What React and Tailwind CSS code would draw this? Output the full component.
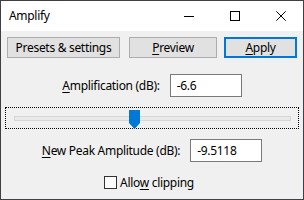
function TitleButton({ children }) {
  return <div className="w-[46px] h-full flex items-center justify-center pl-[2px]">{children}</div>
}

function Field({ mnemonic, rest, value }) {
  return (
    <div className="flex items-center justify-center gap-[10px] h-[23px]">
      <span>
        <span className="underline underline-offset-2">{mnemonic}</span>
        {rest}
      </span>
      <div className="w-[72px] h-[23px] border border-[#7a7a7a] bg-white pl-[6px] flex items-center">{value}</div>
    </div>
  )
}

export default function App() {
  return (
    <div className="w-[304px] h-[200px] border border-[#3f3f46] bg-[#f0f0f0] flex flex-col font-['Segoe_UI','Noto_Sans',sans-serif] text-[12px] tracking-[-0.3px] leading-none text-black">
      {/* title bar */}
      <div className="h-[30px] bg-white flex items-center shrink-0">
        <span className="pl-[8px] flex-1">Amplify</span>
        <TitleButton>
          <svg width="10" height="10" viewBox="0 0 10 10" shapeRendering="crispEdges">
            <line x1="0" y1="5.5" x2="10" y2="5.5" stroke="#000" strokeWidth="1" />
          </svg>
        </TitleButton>
        <TitleButton>
          <svg width="10" height="10" viewBox="0 0 10 10" shapeRendering="crispEdges">
            <rect x="0.5" y="0.5" width="9" height="9" fill="none" stroke="#000" strokeWidth="1" />
          </svg>
        </TitleButton>
        <TitleButton>
          <svg width="10" height="10" viewBox="0 0 10 10">
            <path d="M0.3 0.3 L9.7 9.7 M9.7 0.3 L0.3 9.7" stroke="#000" strokeWidth="1" />
          </svg>
        </TitleButton>
      </div>

      {/* buttons */}
      <div className="flex pl-[6px] mt-[6px] h-[21px]">
        <button className="w-[113px] h-full bg-[#e1e1e1] border border-[#adadad]">Presets &amp; settings</button>
        <button className="w-[88px] h-full ml-[9px] bg-[#e1e1e1] border border-[#adadad]">
          <span className="underline underline-offset-2">P</span>review
        </button>
        <button className="w-[73px] h-full ml-[7px] bg-[#e1e1e1] border-2 border-[#0078d7]">
          <span className="underline underline-offset-2">A</span>pply
        </button>
      </div>

      <div className="mt-[16px]">
        <Field mnemonic="A" rest="mplification (dB):" value="-6.6" />
      </div>

      {/* slider */}
      <div className="relative mt-[10px] mx-[4px] h-[22px] border border-dotted border-black flex items-center pl-[8px] pr-[7px]">
        <div className="w-full h-[5px] bg-[#e7eae7] border border-[#d6d6d6]" />
        <svg className="absolute left-[123px] top-[2px]" width="11" height="19" viewBox="0 0 11 19">
          <polygon points="0,0 11,0 11,13 5.5,19 0,13" fill="#0078d7" />
        </svg>
      </div>

      <div className="mt-[10px]">
        <Field mnemonic="N" rest="ew Peak Amplitude (dB):" value="-9.5118" />
      </div>

      <div className="mt-[14px] flex items-center justify-center gap-[3px] pr-[6px]">
        <div className="w-[13px] h-[13px] border border-[#333333] bg-white" />
        <span>
          Allo<span className="underline underline-offset-2">w</span> clipping
        </span>
      </div>
    </div>
  )
}
